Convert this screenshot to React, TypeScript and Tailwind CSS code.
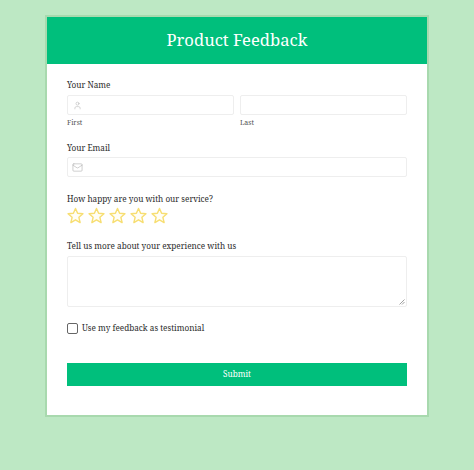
import { Mail, User } from "lucide-react";

function Star() {
  return (
    <svg width="17" height="17" viewBox="0 0 24 24" fill="#fffef6" stroke="#f7de72" strokeWidth="2" strokeLinejoin="round">
      <path d="M12 2l3 6.900 7.500.7-5.700 5 1.700 7.400L12 18.100 5.500 22l1.700-7.400-5.700-5 7.500-.7z" />
    </svg>
  );
}

export default function App() {
  return (
    <div className="font-['Noto_Serif','DejaVu_Serif',serif] w-[474px] h-[470px] bg-[#bde8c4] pt-[15px] pl-[45px] overflow-hidden">
      <div className="w-[384px] h-[402px] border-2 border-[#a8d9ae] bg-white">
        <div className="h-[47px] bg-[#00bf7c] flex items-center justify-center text-white text-[16.6px]">
          Product Feedback
        </div>

        <div className="px-[20px] pt-[14px] text-[#2b2b2b] text-[8.2px]">
          <div className="leading-[14px]">Your Name</div>
          <div className="flex gap-[6px] mt-[3px]">
            <div className="flex-1">
              <div className="h-[20px] border border-[#eeeeee] rounded-[2px] flex items-center pl-[5px]">
                <User size={9} strokeWidth={1.5} className="text-[#b5b5b5]" />
              </div>
              <div className="text-[7px] text-[#555] leading-[10px] mt-[3px]">First</div>
            </div>
            <div className="flex-1">
              <div className="h-[20px] border border-[#eeeeee] rounded-[2px]" />
              <div className="text-[7px] text-[#555] leading-[10px] mt-[3px]">Last</div>
            </div>
          </div>

          <div className="leading-[14px] mt-[13px]">Your Email</div>
          <div className="h-[20px] border border-[#eeeeee] rounded-[2px] flex items-center pl-[4px] mt-[2px]">
            <Mail size={11} strokeWidth={1.25} className="text-[#aaaaaa]" />
          </div>

          <div className="leading-[14px] mt-[15px]">How happy are you with our service?</div>
          <div className="flex gap-[4px] mt-[1px]">
            <Star />
            <Star />
            <Star />
            <Star />
            <Star />
          </div>

          <div className="leading-[14px] mt-[15px]">Tell us more about your experience with us</div>
          <div className="relative h-[51px] border border-[#eeeeee] rounded-[2px] mt-[3px]">
            <svg className="absolute right-[1px] bottom-[1px]" width="6" height="6" viewBox="0 0 6 6" stroke="#888" strokeWidth="0.8">
              <path d="M0.500 5.500L5.500 0.500M3 5.500L5.500 3" />
            </svg>
          </div>

          <div className="flex items-center gap-[4px] mt-[14px]">
            <div className="w-[11px] h-[11px] border border-[#666] rounded-[2px]" />
            <span className="leading-[14px]">Use my feedback as testimonial</span>
          </div>

          <div className="h-[23px] bg-[#00bf7c] flex items-center justify-center text-white mt-[28px]">
            Submit
          </div>
        </div>
      </div>
    </div>
  );
}
